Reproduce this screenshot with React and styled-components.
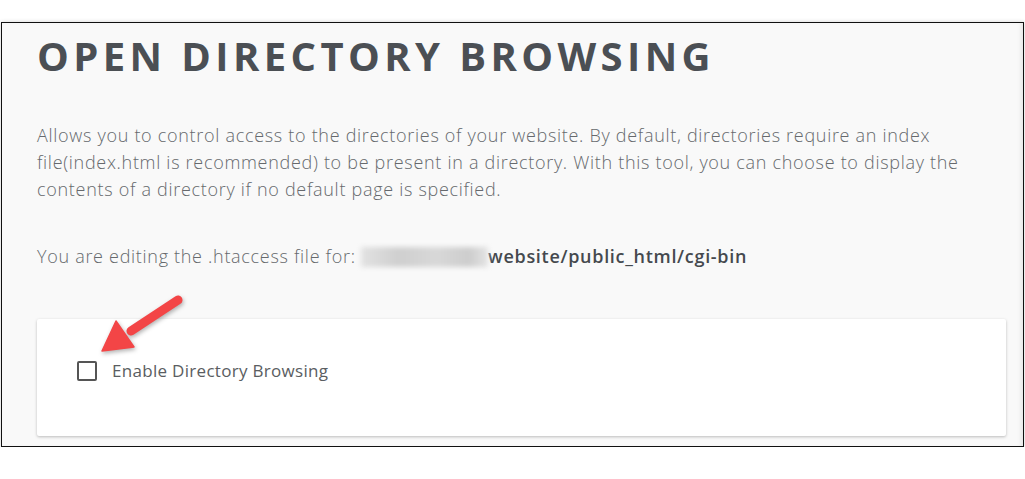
import React from "react";
import styled, { createGlobalStyle } from "styled-components";

const GlobalStyle = createGlobalStyle`
  body {
    margin: 0;
    background: #ffffff;
    font-family: "Open Sans", "Liberation Sans", sans-serif;
  }
`;

const Frame = styled.div`
  margin: 22px 0 0 1px;
  width: 1023px;
  height: 425px;
  box-sizing: border-box;
  border: 1px solid #111;
  background: #f9f9f9;
  box-shadow: 0 0 4px rgba(0, 0, 0, 0.18), inset -4px 0 4px -2px rgba(0, 0, 0, 0.08);
  padding: 0 17px 0 35px;
  display: flex;
  flex-direction: column;
`;

const Title = styled.h1`
  margin: 9px 0 0;
  font-size: 40px;
  line-height: 48px;
  font-weight: 700;
  letter-spacing: 4.4px;
  color: #4b4f54;
`;

const Text = styled.p`
  margin: ${(p) => p.$top}px 0 0;
  font-size: 18px;
  line-height: 27px;
  font-weight: 300;
  letter-spacing: 0.7px;
  white-space: nowrap;
  color: #66696d;
`;

const Blurred = styled.span`
  display: inline-block;
  width: 127px;
  height: 20px;
  vertical-align: -4px;
  filter: blur(2.5px);
  background: linear-gradient(90deg, #e2e2e2, #cfcfcf 30%, #d8d8d8 60%, #cdcdcd 85%, #e4e4e4);
`;

const Path = styled.b`
  font-weight: 600;
  letter-spacing: 0.7px;
  color: #45494e;
`;

const Card = styled.div`
  position: relative;
  margin-top: 49px;
  height: 117px;
  box-sizing: border-box;
  background: #ffffff;
  border-radius: 2px;
  box-shadow: 0 1px 3px rgba(0, 0, 0, 0.25);
  padding: 40px 40px;
`;

const Row = styled.label`
  display: flex;
  align-items: center;
  gap: 15px;
  font-size: 17px;
  letter-spacing: 0.3px;
  color: #5a5d61;
`;

const Box = styled.span`
  width: 20px;
  height: 20px;
  box-sizing: border-box;
  border: 2px solid #555555;
  border-radius: 2px;
`;

const Arrow = styled.svg`
  position: absolute;
  left: 60px;
  top: -25px;
  overflow: visible;
  filter: drop-shadow(1px 2px 2px rgba(0, 0, 0, 0.3));
`;

export default function App() {
  return (
    <>
      <GlobalStyle />
      <Frame>
        <Title>OPEN DIRECTORY BROWSING</Title>
        <Text $top={42}>
          Allows you to control access to the directories of your website. By default, directories require an index
          <br />
          file(index.html is recommended) to be present in a directory. With this tool, you can choose to display the
          <br />
          contents of a directory if no default page is specified.
        </Text>
        <Text $top={40}>
          You are editing the .htaccess file for: <Blurred />
          <Path>website/public_html/cgi-bin</Path>
        </Text>
        <Card>
          <Arrow width="90" height="60" viewBox="0 0 90 60">
            <path d="M81 6 L34 37" stroke="#f34546" strokeWidth="9" strokeLinecap="round" fill="none" />
            <path d="M5 57 L19 27 L37 53 Z" fill="#f34546" stroke="#f34546" strokeWidth="1.5" strokeLinejoin="round" />
          </Arrow>
          <Row>
            <Box />
            Enable Directory Browsing
          </Row>
        </Card>
      </Frame>
    </>
  );
}
